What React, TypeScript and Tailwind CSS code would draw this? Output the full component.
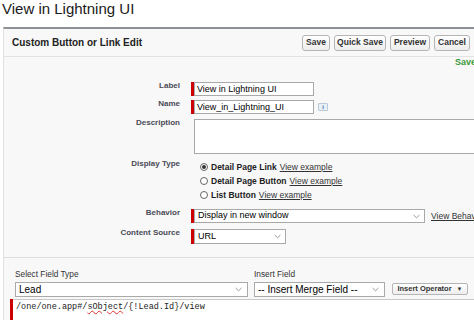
import React from "react";

const Chevron = () => (
  <svg width="7" height="5" viewBox="0 0 7 5" className="shrink-0">
    <path d="M0.6 1 L3.5 3.8 L6.4 1" fill="none" stroke="#8a8a8a" strokeWidth="0.9" />
  </svg>
);

const Req = () => <div className="w-[3px] shrink-0 self-stretch bg-[#c00]" />;
const NoReq = () => <div className="w-[3px] shrink-0 self-stretch" />;

function Label({ children }: { children: React.ReactNode }) {
  return (
    <div className="w-[176px] shrink-0 text-right text-[8px] leading-[8px] font-bold text-[#4a4a56] pr-0">
      {children}
    </div>
  );
}

function Btn({ w, children }: { w: string; children: React.ReactNode }) {
  return (
    <div
      className={`${w} h-[16px] shrink-0 flex items-center justify-center border border-[#b5b5b5] rounded-[3px] bg-gradient-to-b from-white to-[#ededed] text-[8.5px] font-bold text-[#333]`}
    >
      {children}
    </div>
  );
}

function Radio({ checked, label }: { checked?: boolean; label: string }) {
  return (
    <div className="h-[14px] flex items-center whitespace-nowrap">
      <div className="ml-[9px] w-[8px] h-[8px] rounded-full border border-[#666] bg-white flex items-center justify-center shrink-0">
        {checked && <div className="w-[4px] h-[4px] rounded-full bg-[#333]" />}
      </div>
      <span className="ml-[3px] text-[8.5px] font-bold text-[#222]">{label}</span>
      <span className="ml-[3px] text-[8.5px] text-[#333] underline">View example</span>
    </div>
  );
}

export default function App() {
  return (
    <div className="w-[474px] h-[320px] overflow-hidden bg-white flex flex-col font-['Liberation_Sans',Arial,sans-serif]">
      <div className="h-[27px] shrink-0 pl-[2px] text-[15px] leading-[18px] text-[#1a1a1a] whitespace-nowrap">
        View in Lightning UI
      </div>
      <div className="ml-[3px] flex-1 border-t-2 border-t-[#8d9094] border-l border-l-[#e2e2e2] bg-[#f8f8f8] flex flex-col min-w-0">
        {/* header */}
        <div className="h-[28px] shrink-0 flex items-center border-b border-b-[#e3e3e3] pl-[8px] pr-[4px]">
          <div className="flex-1 text-[10px] font-bold text-[#222] whitespace-nowrap">
            Custom Button or Link Edit
          </div>
          <div className="flex gap-[4px]">
            <Btn w="w-[28px]">Save</Btn>
            <Btn w="w-[52px]">Quick Save</Btn>
            <Btn w="w-[40px]">Preview</Btn>
            <Btn w="w-[36px]">Cancel</Btn>
          </div>
        </div>

        {/* body */}
        <div className="h-[25px] shrink-0 pl-[451px] text-[9px] leading-[10px] font-bold text-[#3a9a3a] whitespace-nowrap">
          Save
        </div>

        <div className="flex flex-col">
          {/* Label */}
          <div className="flex items-start">
            <Label>Label</Label>
            <div className="ml-[11px] flex h-[14px] shrink-0">
              <Req />
              <div className="w-[120px] border border-[#a9a9a9] bg-white text-[9px] leading-[12px] pl-[2px] text-black whitespace-nowrap">
                View in Lightning UI
              </div>
            </div>
          </div>
          {/* Name */}
          <div className="flex items-start mt-[4px]">
            <Label>Name</Label>
            <div className="ml-[11px] flex h-[14px] shrink-0">
              <Req />
              <div className="w-[120px] border border-[#a9a9a9] bg-white text-[9px] leading-[12px] pl-[2px] text-black whitespace-nowrap">
                View_in_Lightning_UI
              </div>
            </div>
            <div className="ml-[4px] mt-[3px] w-[10px] h-[8px] rounded-[1px] border border-[#b8c8d8] bg-[#e8f0f8] flex items-center justify-center text-[6px] leading-[6px] font-bold text-[#3b6ea5]">
              i
            </div>
          </div>
          {/* Description */}
          <div className="flex items-start mt-[5px]">
            <Label>Description</Label>
            <div className="ml-[11px] flex shrink-0">
              <NoReq />
              <div className="w-[300px] h-[35px] border border-[#a9a9a9] bg-white" />
            </div>
          </div>
          {/* Display Type */}
          <div className="flex items-start mt-[6px]">
            <Label>Display Type</Label>
            <div className="ml-[11px] flex flex-col shrink-0">
              <Radio checked label="Detail Page Link" />
              <Radio label="Detail Page Button" />
              <Radio label="List Button" />
            </div>
          </div>
          {/* Behavior */}
          <div className="flex items-start mt-[7px]">
            <Label>Behavior</Label>
            <div className="ml-[11px] flex h-[14px] shrink-0">
              <Req />
              <div className="w-[231px] border border-[#a9a9a9] bg-white flex items-center justify-between pl-[3px] pr-[4px] text-[9px] text-black whitespace-nowrap">
                <span>Display in new window</span>
                <Chevron />
              </div>
            </div>
            <span className="ml-[6px] shrink-0 text-[8.5px] leading-[14px] text-[#333] underline whitespace-nowrap">
              View Behavior
            </span>
          </div>
          {/* Content Source */}
          <div className="flex items-start mt-[6px]">
            <Label>Content Source</Label>
            <div className="ml-[11px] flex h-[15px] shrink-0">
              <Req />
              <div className="w-[92px] border border-[#a9a9a9] bg-white flex items-center justify-between pl-[3px] pr-[4px] text-[9px] text-black whitespace-nowrap">
                <span>URL</span>
                <Chevron />
              </div>
            </div>
          </div>
        </div>

        {/* lower section */}
        <div className="mt-[13px] border-t border-t-[#dedede] flex flex-col">
          <div className="flex pl-[11px] pt-[11px]">
            <div className="w-[233px] shrink-0 flex flex-col">
              <div className="text-[8.3px] leading-[10px] text-[#333] whitespace-nowrap">Select Field Type</div>
              <div className="mt-[3px] h-[15px] border border-[#a9a9a9] bg-white flex items-center justify-between pl-[3px] pr-[5px] text-[10px] text-black">
                <span>Lead</span>
                <Chevron />
              </div>
            </div>
            <div className="ml-[6px] w-[131px] shrink-0 flex flex-col">
              <div className="text-[8.3px] leading-[10px] text-[#333] whitespace-nowrap">Insert Field</div>
              <div className="mt-[3px] h-[15px] border border-[#a9a9a9] bg-white flex items-center justify-between pl-[3px] pr-[5px] text-[10px] text-black whitespace-nowrap">
                <span>-- Insert Merge Field --</span>
                <Chevron />
              </div>
            </div>
            <div className="ml-[7px] mt-[14px] w-[76px] h-[12px] shrink-0 flex items-center justify-center gap-[5px] border border-[#b5b5b5] rounded-[2px] bg-gradient-to-b from-white to-[#ededed] text-[7.5px] font-bold text-[#333] whitespace-nowrap">
              <span>Insert Operator</span>
              <span className="text-[6px]">▼</span>
            </div>
          </div>
          <div className="mt-[2px] ml-[6px] flex h-[30px]">
            <Req />
            <div className="flex-1 border-t border-t-[#c8c8c8] bg-white pl-[3px] pt-[2px] font-['Liberation_Mono',monospace] text-[8.5px] leading-[10px] text-[#222] whitespace-nowrap">
              /one/one.app#/<span className="underline decoration-wavy decoration-[#d33]">sObject</span>/{"{!Lead.Id}"}/view
            </div>
          </div>
        </div>
      </div>
    </div>
  );
}
